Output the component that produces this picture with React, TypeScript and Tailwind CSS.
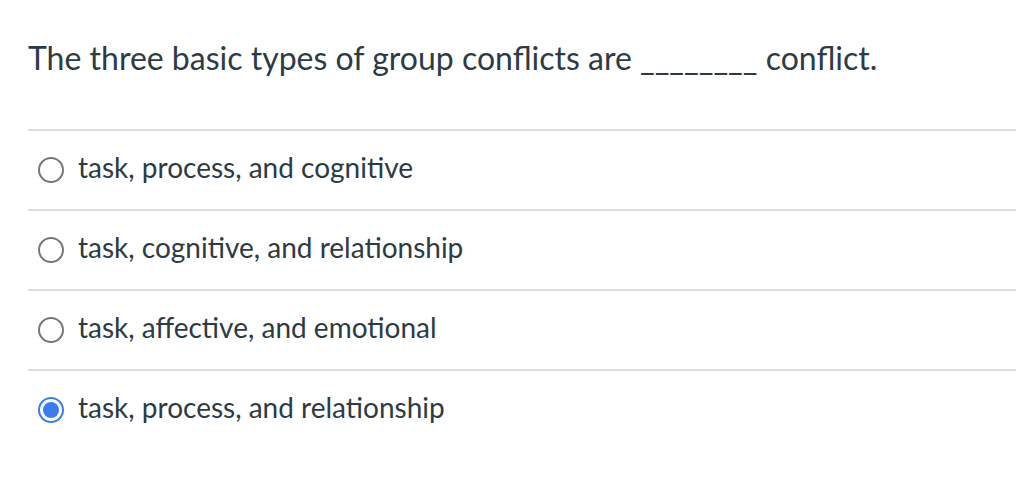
import { useState } from 'react';

const answers = [
  'task, process, and cognitive',
  'task, cognitive, and relationship',
  'task, affective, and emotional',
  'task, process, and relationship',
];

export default function App() {
  const [selected, setSelected] = useState(3);
  return (
    <div className="w-[1016px] h-[484px] bg-white overflow-hidden text-[#2d3b45]" style={{ fontFamily: 'Lato, "Noto Sans", sans-serif' }}>
      <div className="pl-[28px]">
        <div className="h-[129px] pt-[38px] text-[32px] leading-[40px]">
          The three basic types of group conflicts are ________ conflict.
        </div>
        <div>
          {answers.map((a, i) => (
            <label key={a} onClick={() => setSelected(i)} className="flex items-center h-[80px] border-t-2 border-[#dcdcdc] pl-[10px] cursor-pointer">
              {selected === i ? (
                <span className="w-[26px] h-[26px] rounded-full border-2 border-[#3b7cf4] flex items-center justify-center shrink-0">
                  <span className="w-[16px] h-[16px] rounded-full bg-[#3b7cf4]" />
                </span>
              ) : (
                <span className="w-[26px] h-[26px] rounded-full border-2 border-[#777] shrink-0" />
              )}
              <span className="ml-[14px] pb-[6px] text-[28px] leading-[32px]">{a}</span>
            </label>
          ))}
        </div>
      </div>
    </div>
  );
}
